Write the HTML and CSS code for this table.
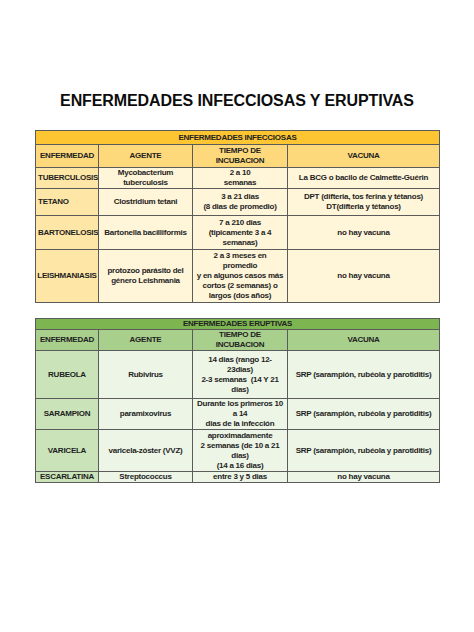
FILE: index.html
```html
<!DOCTYPE html>
<html lang="es">
<head>
<meta charset="utf-8">
<title>Enfermedades infecciosas y eruptivas</title>
<link rel="stylesheet" href="styles.css">
</head>
<body>
<div class="page">
  <h1 class="title">ENFERMEDADES INFECCIOSAS Y ERUPTIVAS</h1>

  <table class="tbl infec">
    <colgroup><col class="c1"><col class="c2"><col class="c3"><col class="c4"></colgroup>
    <tr class="r-title"><th colspan="4">ENFERMEDADES INFECCIOSAS</th></tr>
    <tr class="r-head h23">
      <th>ENFERMEDAD</th><th>AGENTE</th><th>TIEMPO DE<br>INCUBACION</th><th>VACUNA</th>
    </tr>
    <tr class="h22">
      <td class="name">TUBERCULOSIS</td>
      <td>Mycobacterium<br>tuberculosis</td>
      <td>2 a 10<br>semanas</td>
      <td>La BCG o bacilo de Calmette-Guérin</td>
    </tr>
    <tr class="h27">
      <td class="name">TETANO</td>
      <td>Clostridium tetani</td>
      <td>3 a 21 dias<br>(8 dias de promedio)</td>
      <td>DPT (difteria, tos ferina y tétanos)<br>DT(difteria y tétanos)</td>
    </tr>
    <tr class="h34">
      <td class="name">BARTONELOSIS</td>
      <td>Bartonella bacilliformis</td>
      <td>7 a 210 dias<br>(tipicamente 3 a 4<br>semanas)</td>
      <td>no hay vacuna</td>
    </tr>
    <tr class="h53">
      <td class="name center">LEISHMANIASIS</td>
      <td>protozoo parásito del<br>género Leishmania</td>
      <td>2 a 3 meses en<br>promedio<br>y en algunos casos más<br>cortos (2 semanas) o<br>largos (dos años)</td>
      <td>no hay vacuna</td>
    </tr>
  </table>

  <table class="tbl erupt">
    <colgroup><col class="c1"><col class="c2"><col class="c3"><col class="c4"></colgroup>
    <tr class="r-title"><th colspan="4">ENFERMEDADES ERUPTIVAS</th></tr>
    <tr class="r-head h20">
      <th>ENFERMEDAD</th><th>AGENTE</th><th>TIEMPO DE<br>INCUBACION</th><th>VACUNA</th>
    </tr>
    <tr class="h49">
      <td class="name">RUBEOLA</td>
      <td>Rubivirus</td>
      <td>14 dias (rango 12-<br>23dias)<br>2-3 semanas&nbsp; (14 Y 21<br>dias)</td>
      <td>SRP (sarampión, rubéola y parotiditis)</td>
    </tr>
    <tr class="h32">
      <td class="name">SARAMPION</td>
      <td>paramixovirus</td>
      <td>Durante los primeros 10<br>a 14<br>dias de la infección</td>
      <td>SRP (sarampión, rubéola y parotiditis)</td>
    </tr>
    <tr class="h43">
      <td class="name">VARICELA</td>
      <td>varicela-zóster (VVZ)</td>
      <td>aproximadamente<br>2 semanas (de 10 a 21<br>dias)<br>(14 a 16 dias)</td>
      <td>SRP (sarampión, rubéola y parotiditis)</td>
    </tr>
    <tr class="h11">
      <td class="name">ESCARLATINA</td>
      <td>Streptococcus</td>
      <td>entre 3 y 5 dias</td>
      <td>no hay vacuna</td>
    </tr>
  </table>
</div>
</body>
</html>
```

FILE: styles.css
```css
html, body {
  margin: 0;
  padding: 0;
  background: #ffffff;
}

.page {
  width: 474px;
  height: 632px;
  padding-top: 92px;
  box-sizing: border-box;
  font-family: "Liberation Sans", Arial, sans-serif;
  color: #1e1e1e;
}

.title {
  margin: 0 0 20px 0;
  font-size: 16px;
  line-height: 18px;
  font-weight: bold;
  text-align: center;
  color: #0c0c0c;
  letter-spacing: -0.1px;
}

.tbl {
  margin-left: 35px;
  width: 404px;
  border-collapse: collapse;
  table-layout: fixed;
  border: 1px solid #3f3f3f;
  font-size: 8px;
  letter-spacing: -0.25px;
  line-height: 10px;
  font-weight: bold;
}

.tbl .c1 { width: 63px; }
.tbl .c2 { width: 94px; }
.tbl .c3 { width: 95px; }
.tbl .c4 { width: 152px; }

.tbl th,
.tbl td {
  border: 1px solid #5b5b5b;
  padding: 0 1px;
  text-align: center;
  vertical-align: middle;
  white-space: nowrap;
  overflow: hidden;
}

.tbl th {
  color: #222;
}

.infec { margin-bottom: 15px; }

.r-title th { height: 13px; padding: 0; }
.erupt .r-title th { height: 10px; }

.h11 td { height: 10px; }
.h20 th { height: 18px; }
.h22 td { height: 20px; }
.h23 th { height: 22px; }
.h27 td { height: 26px; }
.h32 td { height: 30px; }
.h34 td { height: 33px; }
.h43 td { height: 41px; }
.h49 td { height: 47px; }
.h53 td { height: 52px; }

/* Infecciosas (yellow) */
.infec .r-title th { background: #fdc532; }
.infec .r-head th { background: #fed97c; }
.infec td { background: #fff5d9; }
.infec td.name { background: #fde6a6; text-align: left; padding-left: 2px; }
.infec td.name.center { text-align: center; padding-left: 1px; }

/* Eruptivas (green) */
.erupt .r-title th { background: #7db651; }
.erupt .r-head th { background: #a9cf8d; }
.erupt td { background: #edf5e6; }
.erupt td.name { background: #cbe3b9; }
```
